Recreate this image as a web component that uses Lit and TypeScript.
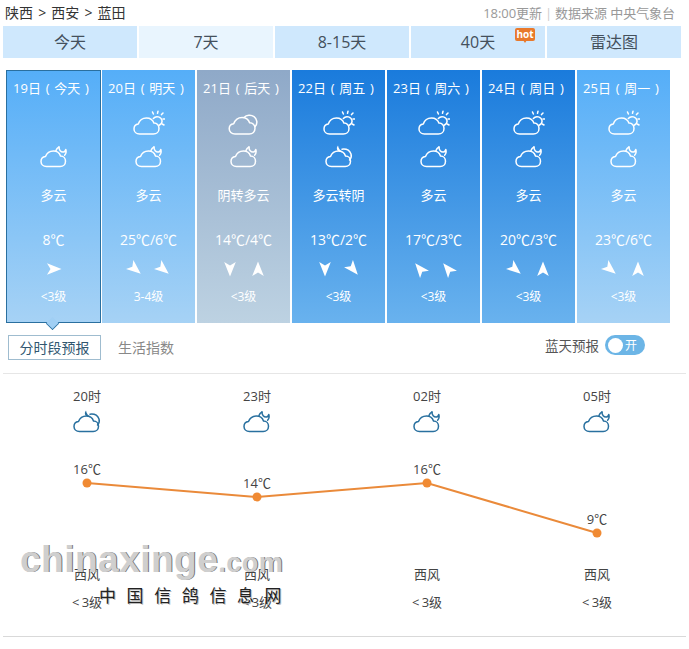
import { LitElement, html, css, svg, unsafeCSS } from "lit";
import { customElement } from "lit/decorators.js";

const FONT = `"Open Sans","Noto Sans CJK SC",sans-serif`;

type Icon = "sun" | "moon" | "cloud" | "moonBig";

const cloud = "M8.500 24.500c-3.300 0-5.500-2.200-5.500-5 0-2.600 1.900-4.600 4.500-4.900C8.700 11.300 12 9 15.500 9c3.300 0 6 2 7 5 2.900 0 5 2.100 5 5.200 0 3.100-2.200 5.300-5.300 5.300z";

function iconSvg(kind: Icon) {
  if (kind === "sun") {
    return svg`<svg class="ic" viewBox="0 0 32 28" width="32" height="28">
      <path d="M20.300 9.500a5 5 0 0 1 8.800 2.500 5 5 0 0 1-2.900 4.300" />
      <path d="M25 2.200l-.5 2M30 4l-1.500 1.600M32 10h-2M31 16l-1.800-1M19.500 3l.9 2" />
      <path d="M6.500 25c-3.200 0-5.500-2.300-5.500-5.100 0-2.600 1.900-4.600 4.300-4.900C6.500 11.500 9.800 9 13.500 9c3.500 0 6.400 2.100 7.400 5.100 3.100-.1 5.100 2.300 5.100 5.300 0 3.200-2.400 5.600-5.700 5.600z" />
    </svg>`;
  }
  if (kind === "cloud") {
    return svg`<svg class="ic" viewBox="0 0 32 28" width="32" height="28">
      <path d="M16 8.500c2.500-2.500 7-3 10-.8 3.300 2.400 3.800 6.800 1.200 9.800"/>
      <path d="M7 25c-3.400 0-5.800-2.400-5.800-5.200 0-2.700 2-4.700 4.500-5C7 11.300 10.300 8.500 14 8.500c3.600 0 6.600 2.200 7.600 5.300 3-.1 5.400 2.300 5.400 5.500 0 3.300-2.400 5.700-5.800 5.700z"/>
    </svg>`;
  }
  if (kind === "moonBig") {
    return svg`<svg class="ic" viewBox="0 0 32 28" width="32" height="28">
      <path class="solid" d="M15 3.500c-2.500 3-1 7 5.500 7-3-1.500-5-3.500-5.500-7z"/>
      <path d="M19 7.200c4-.5 7.500 1 9 4.800.8 2.500 0 4.500-1.500 6"/>
      <path d="${cloud}"/>
    </svg>`;
  }
  return svg`<svg class="ic" viewBox="0 0 32 28" width="32" height="28">
    <path d="M21 5c-1.500.8-2.500 1.900-3 3.500"/>
    <path d="M21 5c-.2 3 1.800 5.300 4.500 5 1.200-.2 2-1 2.300-2.500.6 2 .2 4.300-1.200 5.800"/>
    <path d="${cloud}"/>
  </svg>`;
}

function windArrow(rot: number) {
  return svg`<svg viewBox="-9 -9 18 18" width="18" height="18"><path d="M0-8 6-7 0 0z" fill="none"/><path d="M0-7.500 5.800 7 0 3.500-5.800 7z" fill="#fff" transform="rotate(${rot})"/></svg>`;
}

const days = [
  { d: "19日 ( 今天 )", i: [null, "moon"], w: "多云", t: "8℃", a: [90], l: "<3级", c: "c-light", active: true },
  { d: "20日 ( 明天 )", i: ["sun", "moon"], w: "多云", t: "25℃/6℃", a: [130, 130], l: "3-4级", c: "c-light" },
  { d: "21日 ( 后天 )", i: ["cloud", "moon"], w: "阴转多云", t: "14℃/4℃", a: [180, 0], l: "<3级", c: "c-gray" },
  { d: "22日 ( 周五 )", i: ["sun", "moonBig"], w: "多云转阴", t: "13℃/2℃", a: [180, 140], l: "<3级", c: "c-deep" },
  { d: "23日 ( 周六 )", i: ["sun", "moon"], w: "多云", t: "17℃/3℃", a: [-40, -40], l: "<3级", c: "c-deep" },
  { d: "24日 ( 周日 )", i: ["sun", "moon"], w: "多云", t: "20℃/3℃", a: [130, 0], l: "<3级", c: "c-deep" },
  { d: "25日 ( 周一 )", i: ["sun", "moon"], w: "多云", t: "23℃/6℃", a: [130, 0], l: "<3级", c: "c-light" },
];

const hours = [
  { h: "20时", i: "moonBig", t: "16℃", y: 29 },
  { h: "23时", i: "moon", t: "14℃", y: 43 },
  { h: "02时", i: "moon", t: "16℃", y: 29 },
  { h: "05时", i: "moon", t: "9℃", y: 79 },
];

@customElement("app-root")
export class AppRoot extends LitElement {
  static styles = css`
    :host { display: block; width: 689px; height: 649px; position: relative; overflow: hidden; background: #fff; font-family: ${unsafeCSS(FONT)}; color: #333; }
    .crumbs { display: flex; justify-content: space-between; height: 26px; padding: 3px 14px 0 5px; box-sizing: border-box; font-size: 14px; line-height: 20px; }
    .crumbs .path { word-spacing: 1.5px; }
    .crumbs .src { color: #999; font-size: 13px; letter-spacing: -.05px; }
    .crumbs .sep { color: #ccc; padding: 0 3px; }
    .tabs { display: flex; gap: 2px; padding-left: 3px; }
    .tab { position: relative; width: 134px; height: 32px; background: #cfe8fd; color: #44505c; font-size: 16px; line-height: 32px; text-align: center; }
    .tab.on { background: #e9f5fe; }
    .hot { position: absolute; left: 104px; top: 2px; width: 20px; height: 13px; background: #e8792c; color: #fff; font-size: 10px; line-height: 12px; font-weight: 700; border-radius: 2px; }
    .hot::after { content: ""; position: absolute; left: 8px; top: 12px; border: 2px solid transparent; border-top: 3px solid #e8792c; }
    .cards { display: flex; gap: 2px; padding: 12px 0 0 6px; }
    .card { position: relative; width: 93px; height: 253px; box-sizing: border-box; color: #fff; display: flex; flex-direction: column; align-items: center; font-size: 13px; }
    .card.active { width: 95px; border: 1px solid #2a6f9f; margin-right: -1px; }
    .card.active .inner { margin-top: -1px; }
    .card.active::after { content: ""; position: absolute; left: 40px; bottom: -7px; width: 10px; height: 10px; background: #a0cff4; border-right: 1px solid #2a6f9f; border-bottom: 1px solid #2a6f9f; transform: rotate(45deg) scale(.85); }
    .c-light { background: linear-gradient(#55aef8, #a6d2f5); }
    .c-gray { background: linear-gradient(#8fa9c8, #bdd2e2); }
    .c-deep { background: linear-gradient(#1a7bdc, #69b2ee); }
    .inner { display: flex; flex-direction: column; align-items: center; width: 93px; }
    .date { height: 36px; line-height: 36px; white-space: nowrap; font-size: 13px; word-spacing: 1.4px; margin-right: 5px; }
    .icons { display: flex; flex-direction: column; height: 68px; margin-top: 3px; gap: 5px; }
    .slot { height: 28px; width: 32px; }
    .ic { display: block; fill: none; stroke: currentColor; stroke-width: 1.5; stroke-linecap: round; stroke-linejoin: round; }
    .ic .solid { stroke: none; fill: currentColor; }
    .wtext { height: 20px; line-height: 20px; margin-top: 8px; }
    .temp { height: 20px; line-height: 20px; margin-top: 25px; font-size: 14px; }
    .winds { display: flex; gap: 10px; height: 18px; margin-top: 10px; }
    .level { height: 20px; line-height: 20px; margin-top: 9px; font-size: 12px; }
    .subnav { display: flex; align-items: center; height: 50px; position: relative; }
    .btn { margin: -2px 0 0 8px; width: 93px; height: 25px; box-sizing: border-box; border: 1px solid #9fbccf; color: #30566f; font-size: 14px; line-height: 23px; text-align: center; }
    .alt { margin: -2px 0 0 17px; color: #888; font-size: 14px; }
    .blue { margin: -6px 44px 0 auto; display: flex; align-items: center; gap: 6px; font-size: 13.500px; color: #555; }
    .toggle { width: 40px; height: 20px; border-radius: 10px; background: #6cb5e6; display: flex; align-items: center; padding: 0 3px; box-sizing: border-box; color: #fff; font-size: 12px; gap: 2px; }
    .toggle i { width: 15px; height: 15px; border-radius: 50%; background: #fff; display: block; }
    .hourly { margin: 0 3px; border-top: 1px solid #e6e6e6; border-bottom: 1px solid #d9d9d9; height: 262px; }
    .hgrid { position: relative; display: grid; grid-template-columns: repeat(4, 170px); margin-left: -1px; height: 100%; }
    .col { display: flex; flex-direction: column; align-items: center; font-size: 13px; color: #444; }
    .hh { height: 20px; line-height: 20px; margin-top: 12px; }
    .col .ic { color: #29709f; margin: 1px 0 0; }
    .plot { height: 100px; margin-top: 6px; }
    .wdir { height: 20px; line-height: 20px; margin-top: 23px; }
    .wl { height: 20px; line-height: 20px; margin-top: 8px; word-spacing: -1px; }
    .line { position: absolute; left: 0; top: 80px; width: 680px; height: 100px; overflow: visible; }
    .line text { font-size: 13px; fill: #444; text-anchor: middle; font-family: "Open Sans","Noto Sans CJK SC",sans-serif; }
    .mark { position: absolute; left: 20px; top: 539px; width: 290px; pointer-events: none; color: #cfcfcf; font-family: "Liberation Sans", sans-serif; }
    .mark .en { font-size: 37px; line-height: 42px; font-weight: 700; letter-spacing: .5px; white-space: nowrap; text-shadow: 1px 0 0 #777; }
    .mark .en small { font-size: 27px; }
    .mark .cn { display: block; margin: 0 0 0 79px; color: #222; font-family: "Noto Sans CJK SC", sans-serif; font-size: 17px; line-height: 22px; letter-spacing: 10.6px; white-space: nowrap; text-shadow: 1px 1px 0 #bbb; }
  `;

  render() {
    const cx = (i: number) => 85 + i * 170;
    const pts = hours.map((h, i) => `${cx(i)},${h.y}`).join(" ");
    return html`
      <div class="crumbs">
        <span class="path">陕西 &gt; 西安 &gt; 蓝田</span>
        <span class="src">18:00更新<span class="sep">|</span>数据来源 中央气象台</span>
      </div>
      <div class="tabs">
        <div class="tab">今天</div>
        <div class="tab on">7天</div>
        <div class="tab">8-15天</div>
        <div class="tab">40天<span class="hot">hot</span></div>
        <div class="tab">雷达图</div>
      </div>
      <div class="cards">
        ${days.map((d) => html`
          <div class="card ${d.c} ${d.active ? "active" : ""}">
            <div class="inner">
              <div class="date">${d.d}</div>
              <div class="icons">
                ${d.i.map((k) => html`<div class="slot">${k ? iconSvg(k as Icon) : ""}</div>`)}
              </div>
              <div class="wtext">${d.w}</div>
              <div class="temp">${d.t}</div>
              <div class="winds">${d.a.map((r) => windArrow(r))}</div>
              <div class="level">${d.l}</div>
            </div>
          </div>`)}
      </div>
      <div class="subnav">
        <div class="btn">分时段预报</div>
        <div class="alt">生活指数</div>
        <div class="blue">蓝天预报<span class="toggle"><i></i>开</span></div>
      </div>
      <div class="hourly">
        <div class="hgrid">
          ${hours.map((h) => html`
            <div class="col">
              <div class="hh">${h.h}</div>
              ${iconSvg(h.i as Icon)}
              <div class="plot"></div>
              <div class="wdir">西风</div>
              <div class="wl">&lt; 3级</div>
            </div>`)}
          <svg class="line" viewBox="0 0 680 100">
            <polyline points=${pts} fill="none" stroke="#ea8a3a" stroke-width="2"></polyline>
            ${hours.map((h, i) => svg`
              <circle cx=${cx(i)} cy=${h.y} r="4.500" fill="#f08a33"></circle>
              <text x=${cx(i)} y=${h.y - 9}>${h.t}</text>`)}
          </svg>
        </div>
      </div>
      <div class="mark">
        <div class="en">chinaxinge<small>.com</small></div>
        <span class="cn">中国信鸽信息网</span>
      </div>
    `;
  }
}
